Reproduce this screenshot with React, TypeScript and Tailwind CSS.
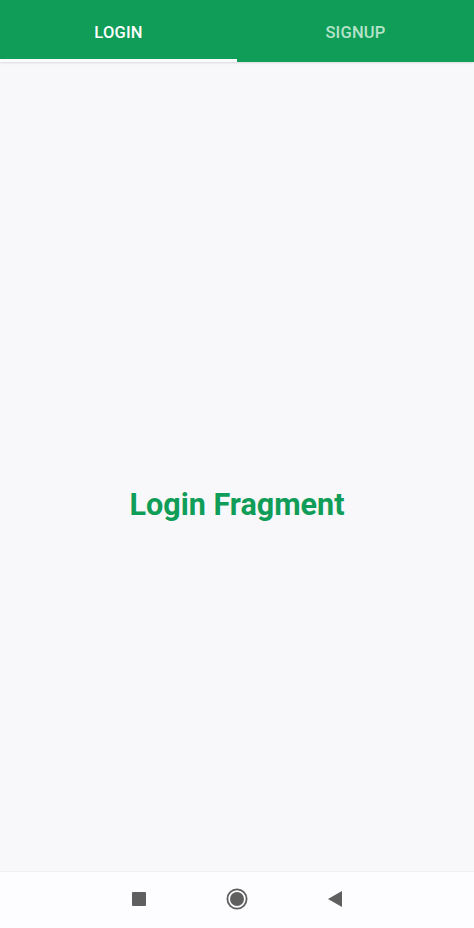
import { useState } from "react";

type Tab = "login" | "signup";

const tabs: { key: Tab; label: string }[] = [
  { key: "login", label: "LOGIN" },
  { key: "signup", label: "SIGNUP" },
];

export default function App() {
  const [active, setActive] = useState<Tab>("login");

  return (
    <div
      className="flex h-[928px] w-[474px] flex-col overflow-hidden bg-[#f8f7fa]"
      style={{ fontFamily: "Roboto, 'Liberation Sans', sans-serif" }}
    >
      {/* Tab bar */}
      <div className="flex h-[62px] shrink-0 bg-[#0f9d58] shadow-[0_1px_2px_rgba(0,0,0,0.12)]">
        {tabs.map((t) => (
          <button
            key={t.key}
            onClick={() => setActive(t.key)}
            className="relative flex flex-1 items-center justify-center pt-[4px] text-[16.5px] font-medium tracking-[0.2px]"
          >
            <span
              className={
                active === t.key ? "text-white" : "text-[#b5e3c9]"
              }
            >
              {t.label}
            </span>
            {active === t.key && (
              <span className="absolute bottom-0 left-0 h-[3px] w-full bg-[#fbfbfb]" />
            )}
          </button>
        ))}
      </div>

      {/* Fragment content */}
      <div className="flex flex-1 items-center justify-center pt-[77px]">
        <h1 className="text-[30.5px] font-bold text-[#0f9d58]">
          {active === "login" ? "Login Fragment" : "Signup Fragment"}
        </h1>
      </div>

      {/* System nav bar */}
      <div className="flex h-[57px] shrink-0 items-center justify-center gap-[80px] border-t border-[#f1f0f3] bg-[#fdfcfe] pb-[2px]">
        <div className="h-[14px] w-[14px] rounded-[1px] bg-[#5f5f5f]" />
        <svg width="22" height="22" viewBox="0 0 22 22">
          <circle cx="11" cy="11" r="9.6" fill="none" stroke="#5f5f5f" strokeWidth="1.8" />
          <circle cx="11" cy="11" r="7" fill="#5f5f5f" />
        </svg>
        <svg width="14" height="16" viewBox="0 0 14 16">
          <path d="M14 0 L14 16 L0 8 Z" fill="#5f5f5f" />
        </svg>
      </div>
    </div>
  );
}
